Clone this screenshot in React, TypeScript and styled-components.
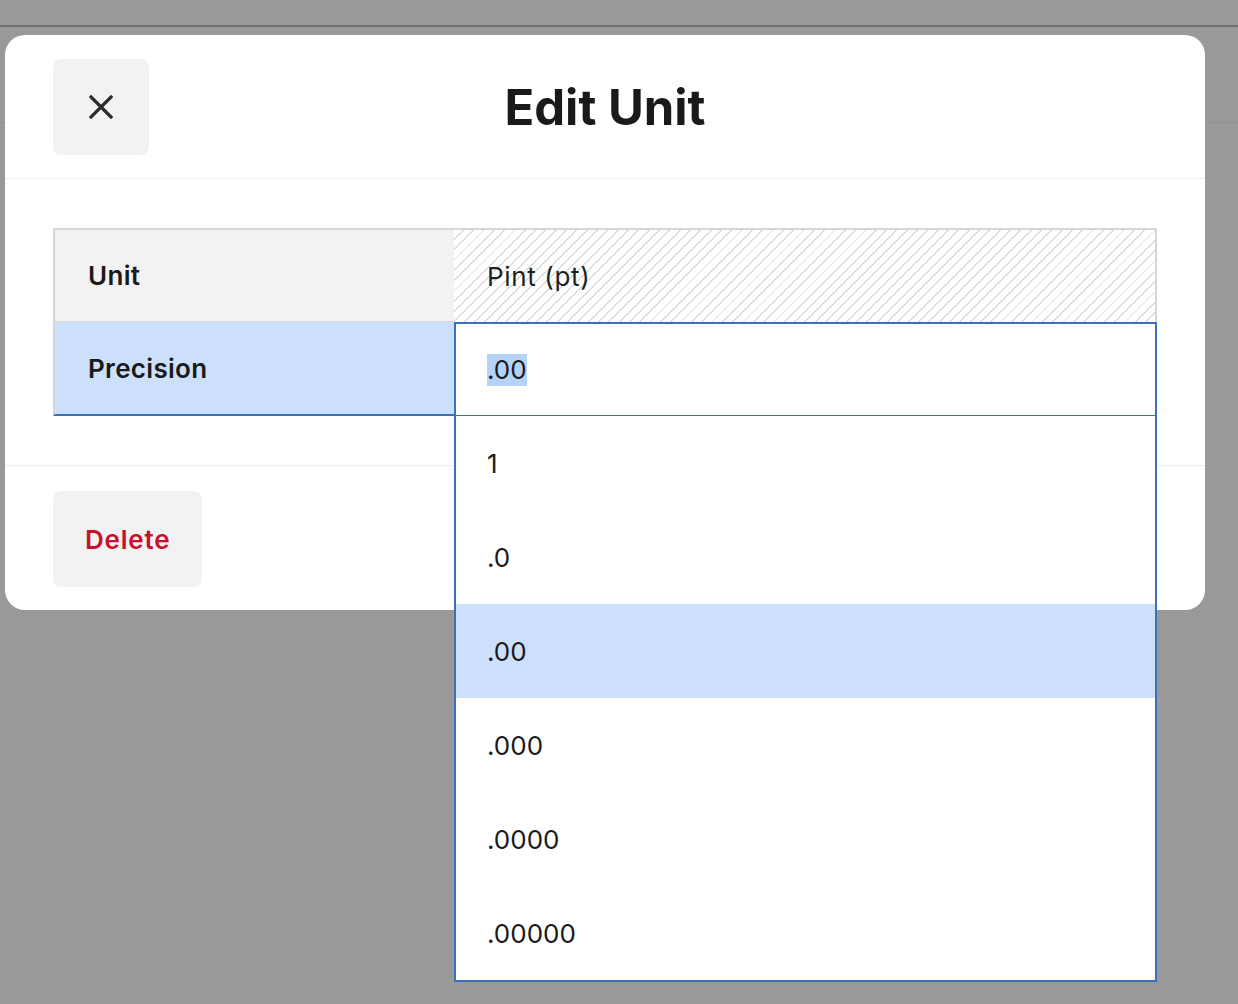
import styled, { createGlobalStyle } from 'styled-components';

const options = ['1', '.0', '.00', '.000', '.0000', '.00000'];
const selected = '.00';

export default function App() {
  return (
    <>
      <GlobalStyle />
      <Page>
        <TopBar />
        <SubBar />

        <Modal role="dialog" aria-label="Edit Unit">
          <Header>
            <CloseButton aria-label="Close">
              <svg width="24" height="24" viewBox="0 0 24 24" fill="none">
                <path d="M2 2L22 22M22 2L2 22" stroke="#2b2b2b" strokeWidth="3.2" strokeLinecap="square" />
              </svg>
            </CloseButton>
            <Title>Edit Unit</Title>
          </Header>

          <Body>
            <Table>
              <LabelCell $pos="top">Unit</LabelCell>
              <ReadOnlyCell>Pint (pt)</ReadOnlyCell>

              <LabelCell $pos="active">Precision</LabelCell>
              <SelectCell>
                <SelectInput>
                  <Selection>{selected}</Selection>
                </SelectInput>
                <Listbox>
                  {options.map((o) => (
                    <Option key={o} $active={o === selected}>{o}</Option>
                  ))}
                </Listbox>
              </SelectCell>
            </Table>
          </Body>

          <Footer>
            <DeleteButton>Delete</DeleteButton>
          </Footer>
        </Modal>
      </Page>
    </>
  );
}

/* ── Styled components ───────────────────────────────────── */

const GlobalStyle = createGlobalStyle`
  * { box-sizing: border-box; }
  html, body {
    margin: 0;
    padding: 0;
    background: #999999;
    font-family: Inter, "Liberation Sans", sans-serif;
  }
`;

const Page = styled.div`
  position: relative;
  width: 1238px;
  height: 1004px;
  overflow: hidden;
  background: #999999;
`;

const TopBar = styled.div`
  height: 27px;
  border-bottom: 2px solid #707070;
`;

const SubBar = styled.div`
  height: 96px;
  border-bottom: 1px solid #909090;
`;

const Modal = styled.div`
  position: absolute;
  top: 35px;
  left: 5px;
  width: 1200px;
  background: #ffffff;
  border-radius: 20px;
  display: flex;
  flex-direction: column;
`;

const Header = styled.div`
  position: relative;
  height: 144px;
  padding: 24px 48px 0;
  border-bottom: 1px solid #efefef;
  display: flex;
  align-items: flex-start;
`;

const CloseButton = styled.button`
  width: 96px;
  height: 96px;
  border: none;
  border-radius: 8px;
  background: #f2f2f2;
  display: flex;
  align-items: center;
  justify-content: center;
  padding: 0;
  cursor: pointer;
`;

const Title = styled.h1`
  position: absolute;
  left: 0;
  right: 0;
  top: 24px;
  height: 96px;
  margin: 0;
  display: flex;
  align-items: center;
  justify-content: center;
  pointer-events: none;
  font-size: 49px;
  font-weight: 700;
  color: #1a1a1a;
`;

const Body = styled.div`
  padding: 49px 48px;
`;

const Table = styled.div`
  display: grid;
  grid-template-columns: 401px 1fr;
  grid-auto-rows: 94px;
`;

const LabelCell = styled.div<{ $pos: 'top' | 'active' }>`
  display: flex;
  align-items: center;
  padding-left: 33px;
  font-size: 26px;
  font-weight: 600;
  letter-spacing: 0.012em;
  color: #1a1a1a;
  border-left: 2px solid #d6d6d6;
  ${({ $pos }) => $pos === 'top'
    ? `
      background: #f2f2f2;
      border-top: 2px solid #d6d6d6;
      border-bottom: 1px solid #d6d6d6;
    `
    : `
      background: #cce0fb;
      border-bottom: 2px solid #3c70b8;
    `}
`;

const ReadOnlyCell = styled.div`
  display: flex;
  align-items: center;
  padding-left: 33px;
  font-size: 26px;
  letter-spacing: 0.025em;
  color: #1f1f1f;
  border-top: 2px solid #d6d6d6;
  border-right: 2px solid #d6d6d6;
  background: repeating-linear-gradient(
    -45deg,
    #ffffff 0px,
    #ffffff 6px,
    #dcdcdc 6px,
    #dcdcdc 7.3px
  );
`;

const SelectCell = styled.div`
  position: relative;
`;

const SelectInput = styled.div`
  height: 94px;
  display: flex;
  align-items: center;
  padding-left: 31px;
  font-size: 26px;
  color: #1a1a1a;
  background: #ffffff;
  border: 2px solid #3c70b8;
  border-bottom-width: 1px;
`;

const Selection = styled.span`
  background: #b5d3f8;
  line-height: 32px;
`;

const Listbox = styled.div`
  position: absolute;
  top: 100%;
  left: 0;
  right: 0;
  z-index: 2;
  background: #ffffff;
  border: 2px solid #3c70b8;
  border-top: none;
  display: flex;
  flex-direction: column;
`;

const Option = styled.div<{ $active: boolean }>`
  height: 94px;
  display: flex;
  align-items: center;
  padding-left: 31px;
  font-size: 26px;
  color: #1a1a1a;
  background: ${({ $active }) => ($active ? '#cce0fb' : '#ffffff')};
`;

const Footer = styled.div`
  border-top: 1px solid #efefef;
  padding: 25px 48px 23px;
  display: flex;
`;

const DeleteButton = styled.button`
  height: 96px;
  padding: 0 32px;
  border: none;
  border-radius: 8px;
  background: #f2f2f2;
  font-family: Inter, "Liberation Sans", sans-serif;
  font-size: 26px;
  font-weight: 600;
  letter-spacing: 0.03em;
  color: #c8102e;
  cursor: pointer;
`;
